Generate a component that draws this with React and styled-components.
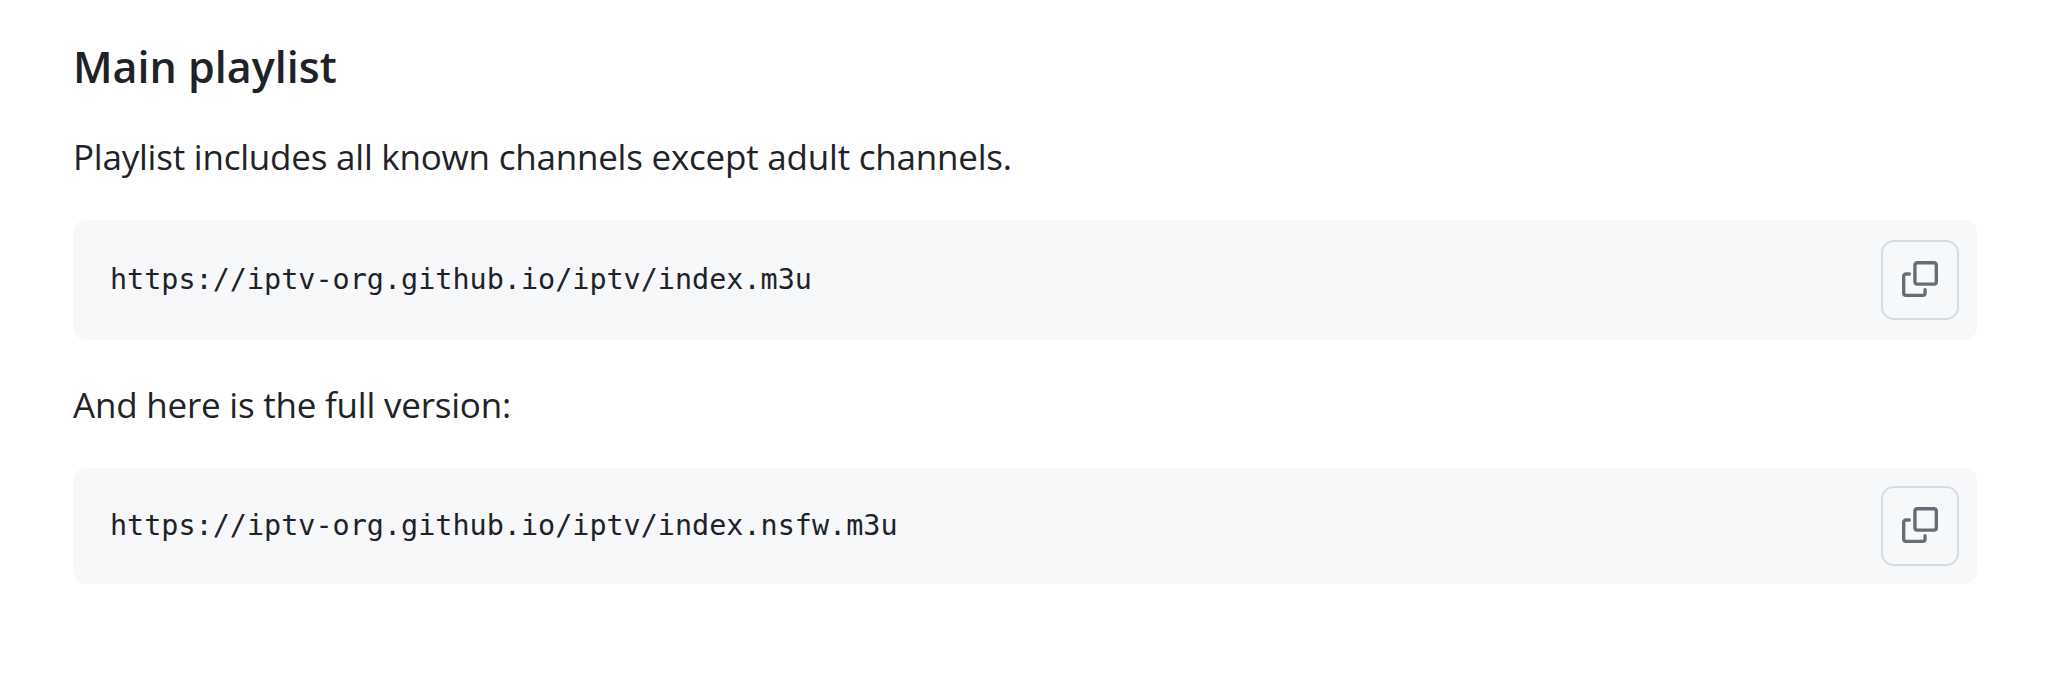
import React from 'react';
import styled, { createGlobalStyle } from 'styled-components';

const GlobalStyle = createGlobalStyle`
  html, body {
    margin: 0;
    padding: 0;
    background: #ffffff;
  }
`;

const Page = styled.div`
  width: 2048px;
  height: 683px;
  box-sizing: border-box;
  padding: 40px 71px 0 73px;
  overflow: hidden;
  font-family: "Open Sans", "Noto Sans", sans-serif;
  color: #1f2328;
`;

const Heading = styled.h3`
  margin: 0 0 38px;
  font-size: 43px;
  line-height: 54px;
  font-weight: 600;
`;

const Paragraph = styled.p`
  margin: 0 0 38px;
  font-size: 35px;
  line-height: 50px;
  font-weight: 400;
  letter-spacing: -0.22px;
`;

const Snippet = styled.div`
  display: flex;
  align-items: center;
  justify-content: space-between;
  height: ${(p) => p.$height}px;
  margin-bottom: 40px;
  padding: 0 18px 0 37px;
  box-sizing: border-box;
  background: #f6f8fa;
  border-radius: 13px;
`;

const Code = styled.code`
  font-family: "DejaVu Sans Mono", "Liberation Mono", monospace;
  font-size: 28.45px;
  line-height: 40px;
  color: #1f2328;
`;

const CopyButton = styled.button`
  display: flex;
  align-items: center;
  justify-content: center;
  width: 78px;
  height: 80px;
  padding: 0 0 2px;
  background: #f6f8fa;
  border: 2px solid #d9dcdf;
  border-radius: 13px;
  color: #656d76;
`;

const CopyIcon = () => (
  <svg width="36" height="36" viewBox="0 0 16 16" fill="currentColor">
    <path d="M0 6.75C0 5.784.784 5 1.75 5h1.5a.75.75 0 0 1 0 1.5h-1.5a.25.25 0 0 0-.25.25v7.5c0 .138.112.25.25.25h7.5a.25.25 0 0 0 .25-.25v-1.5a.75.75 0 0 1 1.5 0v1.5A1.75 1.75 0 0 1 9.25 16h-7.5A1.75 1.75 0 0 1 0 14.25Z" />
    <path d="M5 1.75C5 .784 5.784 0 6.75 0h7.5C15.216 0 16 .784 16 1.75v7.5A1.75 1.75 0 0 1 14.25 11h-7.5A1.75 1.75 0 0 1 5 9.25Zm1.75-.25a.25.25 0 0 0-.25.25v7.5c0 .138.112.25.25.25h7.5a.25.25 0 0 0 .25-.25v-7.5a.25.25 0 0 0-.25-.25Z" />
  </svg>
);

export default function App() {
  return (
    <>
      <GlobalStyle />
      <Page>
        <Heading>Main playlist</Heading>
        <Paragraph>Playlist includes all known channels except adult channels.</Paragraph>
        <Snippet $height={120}>
          <Code>https://iptv-org.github.io/iptv/index.m3u</Code>
          <CopyButton aria-label="Copy"><CopyIcon /></CopyButton>
        </Snippet>
        <Paragraph>And here is the full version:</Paragraph>
        <Snippet $height={116}>
          <Code>https://iptv-org.github.io/iptv/index.nsfw.m3u</Code>
          <CopyButton aria-label="Copy"><CopyIcon /></CopyButton>
        </Snippet>
      </Page>
    </>
  );
}
